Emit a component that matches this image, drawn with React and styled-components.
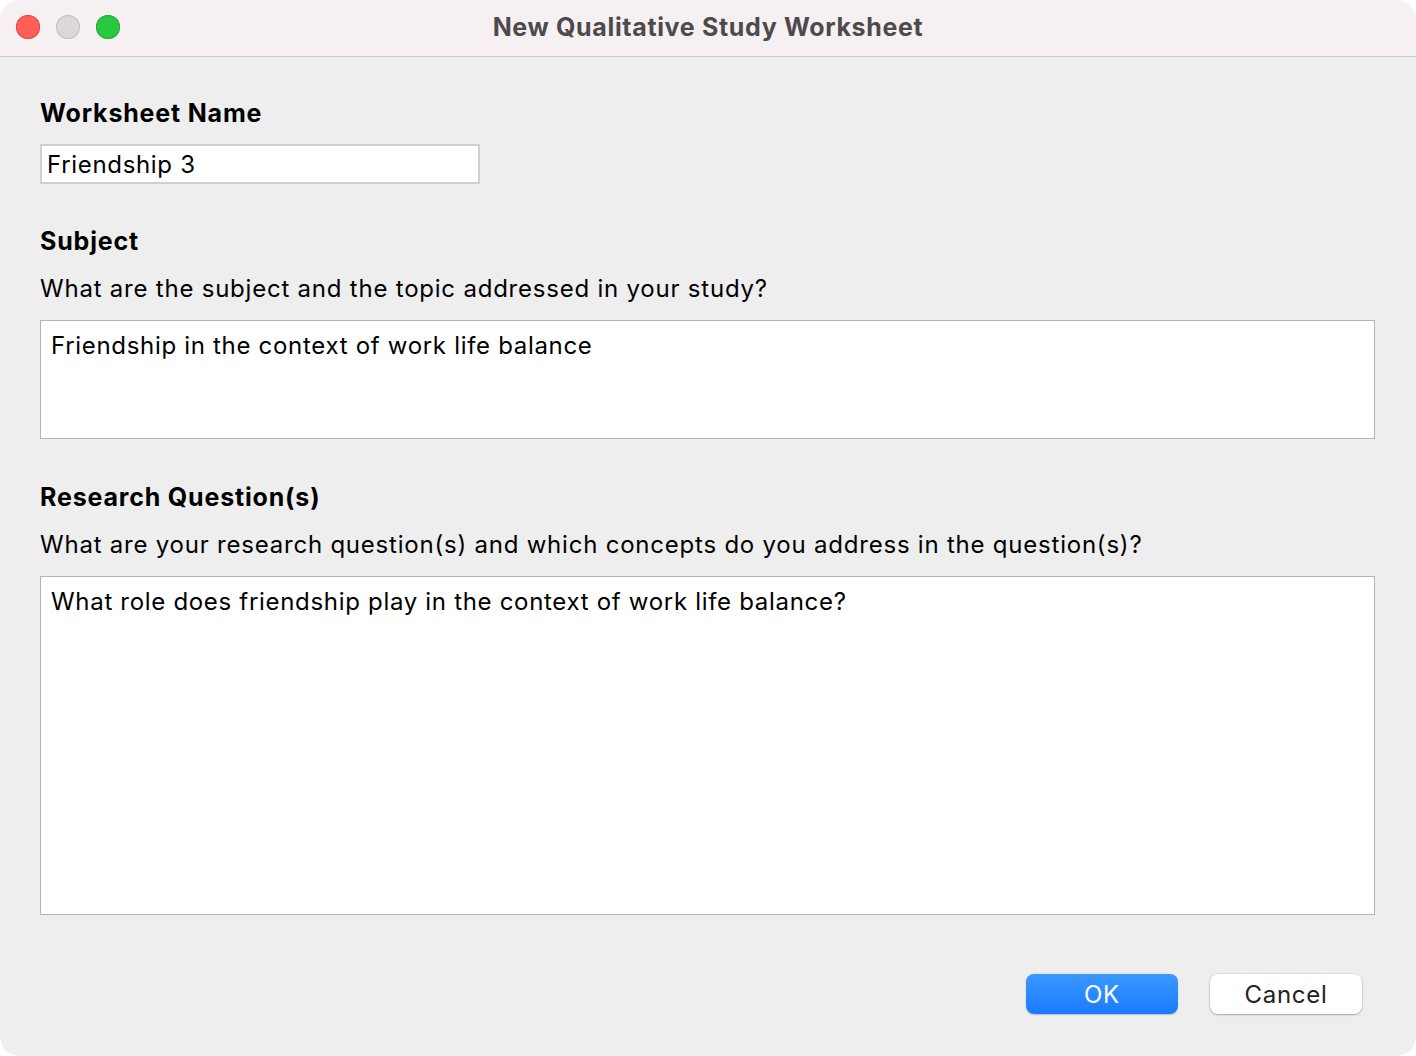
import React from "react";
import styled, { createGlobalStyle } from "styled-components";

const Global = createGlobalStyle`
  html, body {
    margin: 0;
    padding: 0;
    background: #ffffff;
  }
  * { box-sizing: border-box; }
`;

const FONT = `Inter, "Noto Sans", "Liberation Sans", sans-serif`;

const Window = styled.div`
  width: 1416px;
  height: 1056px;
  border-radius: 20px;
  overflow: hidden;
  background: #eeeeee;
  display: flex;
  flex-direction: column;
  font-family: ${FONT};
  color: #000;
`;

const TitleBar = styled.div`
  position: relative;
  height: 57px;
  flex: none;
  background: #f6f0f2;
  border-bottom: 1px solid #cbcbcb;
  display: flex;
  align-items: center;
  justify-content: center;
`;

const Lights = styled.div`
  position: absolute;
  left: 16px;
  top: 15px;
  display: flex;
  gap: 16px;
`;

const Light = styled.span`
  width: 24px;
  height: 24px;
  border-radius: 50%;
  background: ${(p) => p.$color};
  box-shadow: inset 0 0 0 1px ${(p) => p.$edge};
`;

const Title = styled.div`
  font-size: 25px;
  font-weight: 700;
  letter-spacing: 0.65px;
  color: #4d4a4c;
  margin-top: -2px;
`;

const Body = styled.div`
  flex: 1;
  display: flex;
  flex-direction: column;
  padding: 40px 41px 0 40px;
`;

const Label = styled.div`
  font-size: 25px;
  font-weight: 700;
  letter-spacing: 0.82px;
  line-height: 32px;
  margin-top: ${(p) => p.$gap || 0}px;
`;

const Desc = styled.div`
  font-size: 24px;
  letter-spacing: 0.78px;
  line-height: 32px;
  margin-top: 16px;
`;

const TextInput = styled.input`
  display: block;
  width: 440px;
  height: 40px;
  margin-top: 15px;
  padding: 0 5px;
  border: 2px solid #cfcfcf;
  background: #fff;
  font-family: ${FONT};
  font-size: 24px;
  letter-spacing: 0.68px;
  color: #000;
  outline: none;
`;

const Area = styled.textarea`
  display: block;
  width: 100%;
  height: ${(p) => p.$h}px;
  margin-top: 15px;
  padding: 9px 10px;
  border: 1px solid #b4b4b4;
  background: #fff;
  font-family: ${FONT};
  font-size: 24px;
  letter-spacing: 0.69px;
  line-height: 32px;
  color: #000;
  resize: none;
  outline: none;
`;

const Footer = styled.div`
  display: flex;
  justify-content: flex-end;
  gap: 32px;
  margin-top: 59px;
  padding-right: 13px;
`;

const Button = styled.button`
  width: 152px;
  height: 40px;
  border-radius: 8px;
  border: none;
  font-family: ${FONT};
  font-size: 24px;
  letter-spacing: 0.7px;
  cursor: pointer;
  background: ${(p) =>
    p.$primary ? "linear-gradient(180deg, #3b98ff 0%, #1a7bff 100%)" : "#ffffff"};
  color: ${(p) => (p.$primary ? "#ffffff" : "#222222")};
  box-shadow: ${(p) =>
    p.$primary
      ? "0 0.5px 1.5px rgba(0,0,0,0.2)"
      : "0 0 0 0.5px rgba(0,0,0,0.12), 0 1px 2px rgba(0,0,0,0.25)"};
`;

export default function App() {
  return (
    <>
      <Global />
      <Window>
        <TitleBar>
          <Lights>
            <Light $color="#fe5f57" $edge="#e24b43" />
            <Light $color="#ddd7d9" $edge="#c4bec0" />
            <Light $color="#28c840" $edge="#1fae34" />
          </Lights>
          <Title>New Qualitative Study Worksheet</Title>
        </TitleBar>
        <Body>
          <Label>Worksheet Name</Label>
          <TextInput readOnly defaultValue="Friendship 3" />

          <Label $gap={41}>Subject</Label>
          <Desc>What are the subject and the topic addressed in your study?</Desc>
          <Area $h={119} readOnly defaultValue="Friendship in the context of work life balance" />

          <Label $gap={42}>Research Question(s)</Label>
          <Desc>
            What are your research question(s) and which concepts do you address in the question(s)?
          </Desc>
          <Area
            $h={339}
            readOnly
            defaultValue="What role does friendship play in the context of work life balance?"
          />

          <Footer>
            <Button $primary>OK</Button>
            <Button>Cancel</Button>
          </Footer>
        </Body>
      </Window>
    </>
  );
}
